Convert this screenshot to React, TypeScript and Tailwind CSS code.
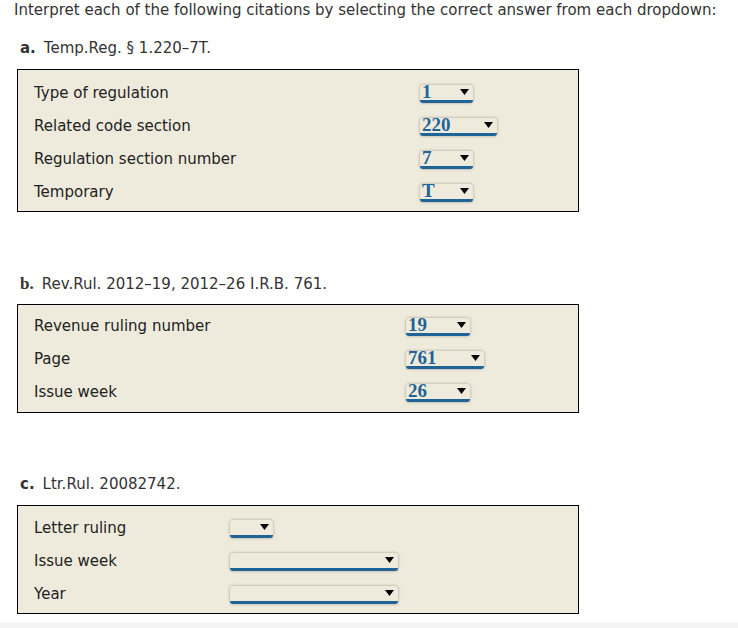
import React from 'react';

const Drop = ({ value, className }: { value?: string; className: string }) => {
  return (
    <div
      className={`relative h-[18px] rounded-[3px] border-b-[3px] border-[#1f6397] shadow-[0_0_3px_rgba(0,0,0,0.35)] bg-[#eeebdc] ${className}`}
    >
      <span className="absolute left-[2px] top-[-4px] font-['Liberation_Serif',serif] font-bold text-[19px] leading-[22px] text-[#1f6397]">
        {value}
      </span>
      <svg className="absolute right-[4px] top-[4px]" width="9" height="6" viewBox="0 0 9 6">
        <path d="M0 0 H9 L4.5 6 Z" fill="#000" />
      </svg>
    </div>
  );
};

const Row = ({ label, labelW, children }: { label: string; labelW: string; children: React.ReactNode }) => (
  <div className="flex items-center h-[33px]">
    <div className={`${labelW} text-[15px] text-[#222]`}>{label}</div>
    {children}
  </div>
);

const App: React.FC = () => {
  return (
    <div className="relative w-[738px] h-[628px] bg-white font-['DejaVu_Sans',Verdana,sans-serif] text-[#333] pl-[14px] overflow-hidden">
      <p className="text-[15px] leading-[20px] text-[#333] whitespace-nowrap">
        Interpret each of the following citations by selecting the correct answer from each dropdown:
      </p>

      {/* a */}
      <p className="mt-[18px] pl-[6px] text-[15px] leading-[20px]">
        <b className="font-bold mr-[8px] text-[#333]">a.</b>Temp.Reg. § 1.220–7T.
      </p>
      <div className="mt-[11px] ml-[3px] w-[562px] border border-black bg-[#eeebdc] pt-[7px] pb-[2px] pl-[16px]">
        <Row label="Type of regulation" labelW="w-[386px]">
          <Drop value="1" className="w-[53px]" />
        </Row>
        <Row label="Related code section" labelW="w-[386px]">
          <Drop value="220" className="w-[77px]" />
        </Row>
        <Row label="Regulation section number" labelW="w-[386px]">
          <Drop value="7" className="w-[53px]" />
        </Row>
        <Row label="Temporary" labelW="w-[386px]">
          <Drop value="T" className="w-[53px]" />
        </Row>
      </div>

      {/* b */}
      <p className="mt-[62px] pl-[6px] text-[15px] leading-[20px]">
        <b className="font-bold font-['Liberation_Serif',serif] text-[17px] mr-[8px] text-[#333]">b.</b>Rev.Rul. 2012–19, 2012–26 I.R.B. 761.
      </p>
      <div className="mt-[10px] ml-[3px] w-[562px] border border-black bg-[#eeebdc] pt-[5px] pb-[3px] pl-[16px]">
        <Row label="Revenue ruling number" labelW="w-[372px]">
          <Drop value="19" className="w-[64px]" />
        </Row>
        <Row label="Page" labelW="w-[372px]">
          <Drop value="761" className="w-[78px]" />
        </Row>
        <Row label="Issue week" labelW="w-[372px]">
          <Drop value="26" className="w-[64px]" />
        </Row>
      </div>

      {/* c */}
      <p className="mt-[61px] pl-[6px] text-[15px] leading-[20px]">
        <b className="font-bold mr-[8px] text-[#333]">c.</b>Ltr.Rul. 20082742.
      </p>
      <div className="mt-[11px] ml-[3px] w-[562px] border border-black bg-[#eeebdc] pt-[6px] pb-[2px] pl-[16px]">
        <Row label="Letter ruling" labelW="w-[196px]">
          <Drop className="w-[43px]" />
        </Row>
        <Row label="Issue week" labelW="w-[196px]">
          <Drop className="w-[168px]" />
        </Row>
        <Row label="Year" labelW="w-[196px]">
          <Drop className="w-[168px]" />
        </Row>
      </div>

      <div className="absolute left-0 right-0 bottom-0 h-[6px] bg-[#f4f4f4]" />
    </div>
  );
};

export default App;
